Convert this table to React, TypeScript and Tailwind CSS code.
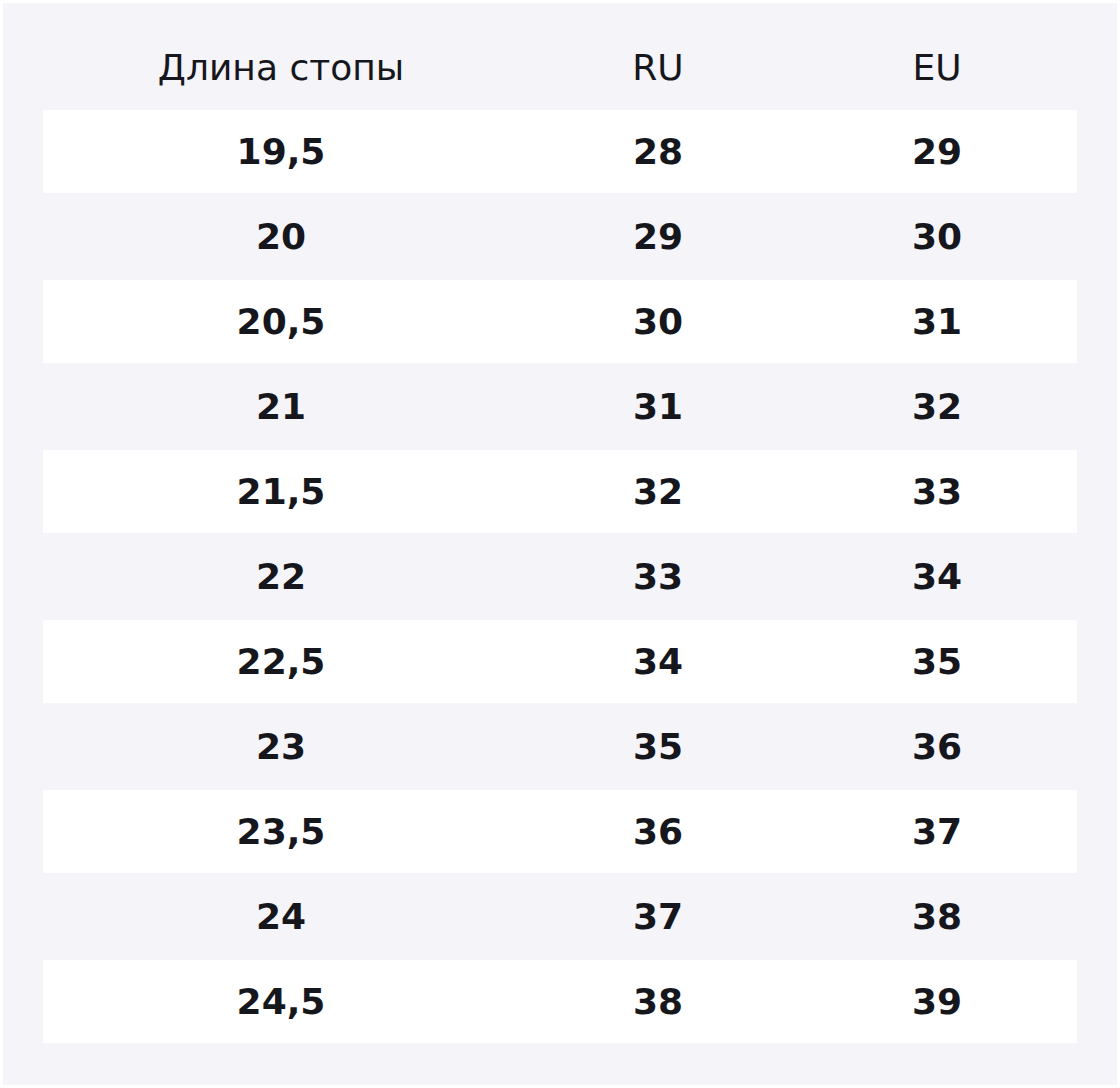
const ROWS: [string, string, string][] = [
  ["19,5", "28", "29"],
  ["20", "29", "30"],
  ["20,5", "30", "31"],
  ["21", "31", "32"],
  ["21,5", "32", "33"],
  ["22", "33", "34"],
  ["22,5", "34", "35"],
  ["23", "35", "36"],
  ["23,5", "36", "37"],
  ["24", "37", "38"],
  ["24,5", "38", "39"],
];

// Size chart: foot length → RU / EU sizes, zebra rows.
export default function App() {
  return (
    <div className="bg-white p-[3px] font-['DejaVu_Sans',sans-serif] text-[#16161d]">
      <div className="bg-[#f4f4f9] px-[40px] pb-[42px]">
        <div className="grid h-[107px] grid-cols-[476px_278px_280px] items-center pt-[22px] text-[36px] font-normal leading-none">
          <div className="text-center">Длина стопы</div>
          <div className="text-center">RU</div>
          <div className="text-center">EU</div>
        </div>
        {ROWS.map((r, i) => (
          <div
            key={r[0]}
            className={
              i % 2 === 0
                ? "grid h-[83px] grid-cols-[476px_278px_280px] items-center bg-white text-[36px] font-bold leading-none"
                : "grid h-[87px] grid-cols-[476px_278px_280px] items-center text-[36px] font-bold leading-none"
            }
          >
            <div className="text-center">{r[0]}</div>
            <div className="text-center">{r[1]}</div>
            <div className="text-center">{r[2]}</div>
          </div>
        ))}
      </div>
    </div>
  );
}
